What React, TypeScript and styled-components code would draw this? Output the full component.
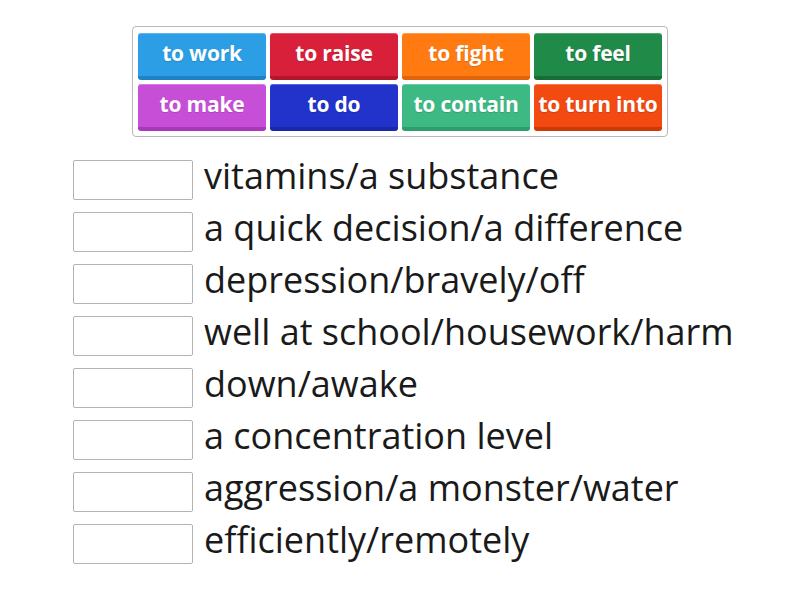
import React, { FC } from 'react';
import styled, { createGlobalStyle } from 'styled-components';

const GlobalStyle = createGlobalStyle`
  html, body {
    margin: 0;
    padding: 0;
    background: #ffffff;
    font-family: 'Open Sans', 'Noto Sans', sans-serif;
  }
`;

type Tile = { label: string; color: string; dark: string };

const tiles: Tile[] = [
  { label: 'to work', color: '#2b9ee5', dark: '#1f82c4' },
  { label: 'to raise', color: '#d8203a', dark: '#b2162c' },
  { label: 'to fight', color: '#ff7b12', dark: '#e0650a' },
  { label: 'to feel', color: '#208a48', dark: '#176d37' },
  { label: 'to make', color: '#c74fd8', dark: '#a838ba' },
  { label: 'to do', color: '#2233cc', dark: '#1a27a8' },
  { label: 'to contain', color: '#3dba84', dark: '#2e9c6c' },
  { label: 'to turn into', color: '#f24a10', dark: '#cc3a08' },
];

const clues = [
  'vitamins/a substance',
  'a quick decision/a difference',
  'depression/bravely/off',
  'well at school/housework/harm',
  'down/awake',
  'a concentration level',
  'aggression/a monster/water',
  'efficiently/remotely',
];

export const App: FC = () => (
  <>
    <GlobalStyle />
    <Page>
      <Bank>
        {tiles.map((t) => (
          <Word key={t.label} $color={t.color} $dark={t.dark}>
            {t.label}
          </Word>
        ))}
      </Bank>
      <List>
        {clues.map((c) => (
          <Row key={c}>
            <Slot />
            <Clue>{c}</Clue>
          </Row>
        ))}
      </List>
    </Page>
  </>
);

export default App;

const Page = styled.div`
  width: 800px;
  height: 600px;
  padding-top: 26px;
  box-sizing: border-box;
`;

const Bank = styled.div`
  width: 536px;
  margin: 0 auto;
  box-sizing: border-box;
  padding: 6px 5px 5px 5px;
  border: 1px solid #b8b8b8;
  border-radius: 4px;
  display: grid;
  grid-template-columns: repeat(4, 128px);
  grid-auto-rows: 47px;
  gap: 4px;
`;

const Word = styled.div<{ $color: string; $dark: string }>`
  display: flex;
  align-items: center;
  justify-content: center;
  box-sizing: border-box;
  background: ${({ $color }) => $color};
  border-radius: 3px;
  border-bottom: 4px solid ${({ $dark }) => $dark};
  box-shadow: inset 0 1px 0 rgba(255, 255, 255, 0.25);
  color: #ffffff;
  font-weight: 700;
  font-size: 21px;
  white-space: nowrap;
  letter-spacing: -0.2px;
  padding-bottom: 3px;
  text-shadow: 0 1px 1px rgba(0, 0, 0, 0.15);
`;

const List = styled.div`
  margin-top: 23px;
  padding-left: 73px;
  display: flex;
  flex-direction: column;
  gap: 12px;
`;

const Row = styled.div`
  display: flex;
  align-items: center;
  height: 40px;
`;

const Slot = styled.div`
  width: 120px;
  height: 40px;
  box-sizing: border-box;
  border: 1px solid #b3b3b3;
  border-radius: 2px;
  background: #ffffff;
  flex-shrink: 0;
`;

const Clue = styled.div`
  margin-left: 11px;
  font-size: 36px;
  color: #1a1a1a;
  white-space: nowrap;
  line-height: 40px;
  margin-top: -8px;
`;
